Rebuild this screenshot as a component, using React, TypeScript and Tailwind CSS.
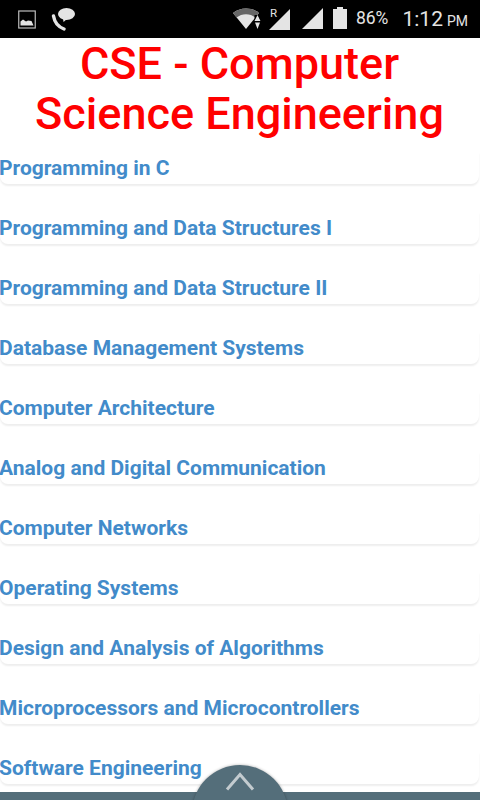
const subjects = [
  "Programming in C",
  "Programming and Data Structures I",
  "Programming and Data Structure II",
  "Database Management Systems",
  "Computer Architecture",
  "Analog and Digital Communication",
  "Computer Networks",
  "Operating Systems",
  "Design and Analysis of Algorithms",
  "Microprocessors and Microcontrollers",
  "Software Engineering",
];

function StatusBar() {
  return (
    <div className="flex h-[38px] shrink-0 items-center bg-black pl-[18px] pr-[12px] text-[#e4e4e4]">
      <svg width="18" height="19" viewBox="0 0 18 19" className="mr-[15px]">
        <rect x="0.75" y="1" width="16.5" height="17" fill="none" stroke="#bdbdbd" strokeWidth="1.2" />
        <path d="M2.5 15.5V11.5L5 9.5L8 11.500L10 10.500L13.500 11L15.500 15.500Z" fill="#e4e4e4" />
      </svg>
      <svg width="24" height="24" viewBox="0 0 24 24">
        <path d="M2.500 9C3.500 15 7.500 20 13 22" fill="none" stroke="#e4e4e4" strokeWidth="3.400" strokeLinecap="round" />
        <ellipse cx="15.500" cy="7" rx="8.500" ry="6" fill="#e4e4e4" />
        <path d="M12 11L12.500 15L16 12Z" fill="#e4e4e4" />
      </svg>
      <div className="ml-auto flex items-center">
        <svg width="28" height="22" viewBox="0 0 28 22" className="mt-[-1px]">
          <path d="M0 5C7 -1 19 -1 26 5L13 21Z" fill="#e4e4e4" />
          <path d="M0 5C7 -1 19 -1 26 5L22.500 9.500C17 5 9 5 3.500 9.500Z" fill="#666666" />
          <path d="M21.500 7H28V22H21.500Z" fill="#000000" />
          <path d="M24.500 7L27.500 13H21.500ZM24.500 21L22 14.500H27Z" fill="#e4e4e4" />
        </svg>
        <div className="relative ml-[8px] mt-[-1px] h-[22px] w-[21px]">
          <svg width="21" height="21" viewBox="0 0 21 21" className="absolute bottom-0 left-0">
            <path d="M21 0V21H0Z" fill="#e4e4e4" />
          </svg>
          <span className="absolute left-[1px] top-0 font-['Roboto',sans-serif] text-[11.500px] leading-[11px]">R</span>
        </div>
        <svg width="21" height="21" viewBox="0 0 21 21" className="ml-[12px] mt-[-1px]">
          <path d="M21 0V21H0Z" fill="#e4e4e4" />
        </svg>
        <svg width="14" height="22" viewBox="0 0 14 22" className="ml-[10px] mt-[-2px]">
          <path d="M4 0H10V2H14V22H0V2H4Z" fill="#e4e4e4" />
        </svg>
        <span className="ml-[9px] font-['Roboto',sans-serif] text-[17.5px] leading-none">86%</span>
        <span className="ml-[14px] font-['Roboto',sans-serif] text-[21px] leading-none">1:12</span>
        <span className="ml-[4px] mt-[3px] font-['Roboto',sans-serif] text-[14px] leading-none">PM</span>
      </div>
    </div>
  );
}

export default function App() {
  return (
    <div className="relative flex h-[800px] w-[480px] flex-col overflow-hidden bg-white font-['Roboto',sans-serif]">
      <StatusBar />
      <h1 className="-ml-[1px] pt-[1px] text-center text-[45px] font-medium leading-[50px] text-[#ff0000]">
        CSE - Computer
        <br />
        Science Engineering
      </h1>
      <ul className="mt-[13px] flex flex-col gap-[28px]">
        {subjects.map((s) => (
          <li
            key={s}
            className="mr-[1px] flex h-[32px] items-center rounded-b-[8px] bg-white pt-[2px] text-[21px] font-bold text-[#428bca] shadow-[0_2px_2px_rgba(0,0,0,0.07)]"
          >
            <span className="-ml-[1px]">{s}</span>
          </li>
        ))}
      </ul>
      <div className="absolute inset-x-0 bottom-0 h-[8px] bg-[#546e7a]" />
      <div className="absolute bottom-[-61px] left-[192px] h-[96px] w-[96px] rounded-full bg-[#546e7a] shadow-[0_0_3px_rgba(0,0,0,0.3)]">
        <svg width="30" height="19" viewBox="0 0 30 19" className="absolute left-[33px] top-[7px]">
          <path d="M2 17.500L15 2.500L28 17.500" fill="none" stroke="#c3cbcf" strokeWidth="3" />
        </svg>
      </div>
    </div>
  );
}
